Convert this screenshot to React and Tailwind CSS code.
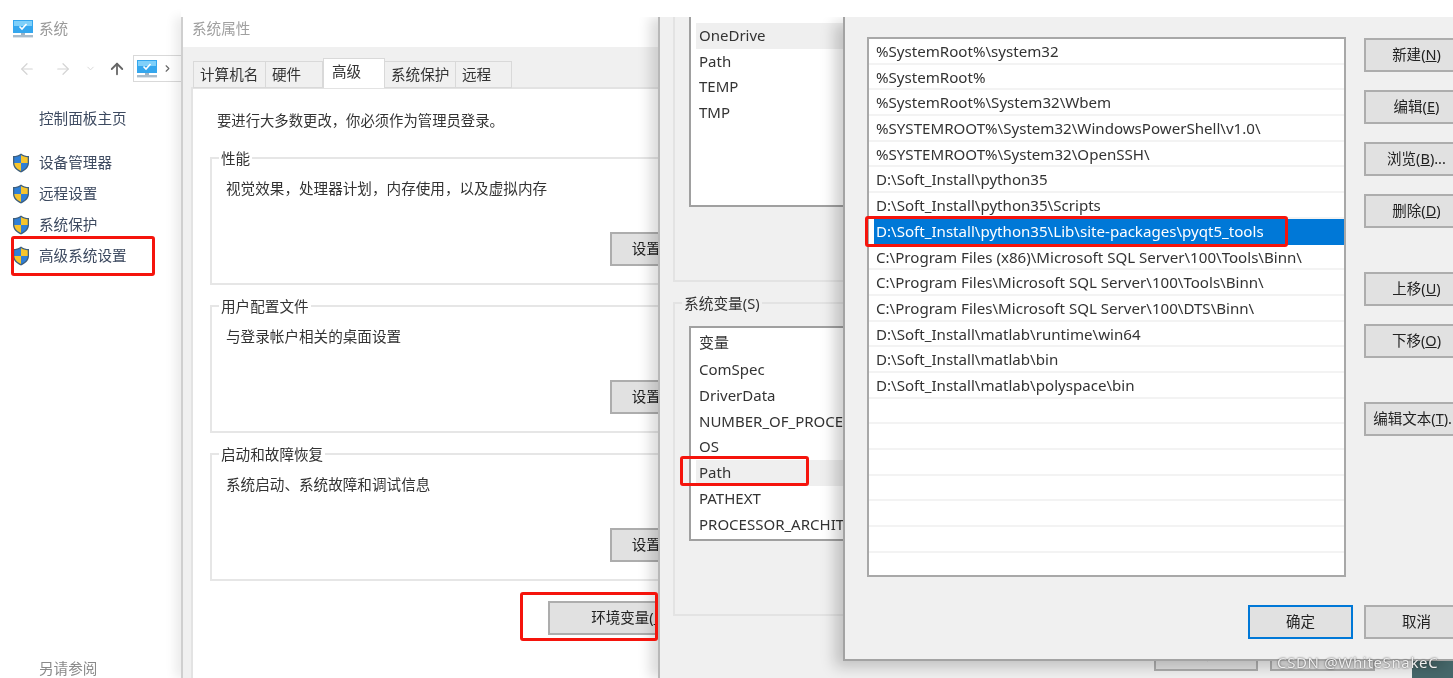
import { ArrowLeft, ArrowRight, ArrowUp, ChevronDown, ChevronRight } from "lucide-react";

const navLinks = ["设备管理器", "远程设置", "系统保护", "高级系统设置"];

const tabs = [
  { label: "计算机名", w: "w-[73px]" },
  { label: "硬件", w: "w-[57px]" },
  { label: "高级", w: "w-[62px]", active: true },
  { label: "系统保护", w: "w-[71px]" },
  { label: "远程", w: "w-[56px]" },
];

const groups = [
  { title: "性能", text: "视觉效果，处理器计划，内存使用，以及虚拟内存" },
  { title: "用户配置文件", text: "与登录帐户相关的桌面设置" },
  { title: "启动和故障恢复", text: "系统启动、系统故障和调试信息" },
];

const userVars = ["OneDrive", "Path", "TEMP", "TMP"];
const sysVars = ["ComSpec", "DriverData", "NUMBER_OF_PROCESSORS", "OS", "Path", "PATHEXT", "PROCESSOR_ARCHITECTURE"];

const paths = [
  "%SystemRoot%\\system32",
  "%SystemRoot%",
  "%SystemRoot%\\System32\\Wbem",
  "%SYSTEMROOT%\\System32\\WindowsPowerShell\\v1.0\\",
  "%SYSTEMROOT%\\System32\\OpenSSH\\",
  "D:\\Soft_Install\\python35",
  "D:\\Soft_Install\\python35\\Scripts",
  "D:\\Soft_Install\\python35\\Lib\\site-packages\\pyqt5_tools",
  "C:\\Program Files (x86)\\Microsoft SQL Server\\100\\Tools\\Binn\\",
  "C:\\Program Files\\Microsoft SQL Server\\100\\Tools\\Binn\\",
  "C:\\Program Files\\Microsoft SQL Server\\100\\DTS\\Binn\\",
  "D:\\Soft_Install\\matlab\\runtime\\win64",
  "D:\\Soft_Install\\matlab\\bin",
  "D:\\Soft_Install\\matlab\\polyspace\\bin",
  "", "", "", "", "", "", "",
];

const sideButtons = [
  { name: "新建", hotkey: "N", mt: "mt-[21px]" },
  { name: "编辑", hotkey: "E", mt: "mt-[18px]" },
  { name: "浏览", hotkey: "B", rest: "...", mt: "mt-[18px]" },
  { name: "删除", hotkey: "D", mt: "mt-[18px]" },
  { name: "上移", hotkey: "U", mt: "mt-[44px]" },
  { name: "下移", hotkey: "O", mt: "mt-[18px]" },
  { name: "编辑文本", hotkey: "T", rest: "...", mt: "mt-[44px]" },
];

function Monitor({ className }) {
  return (
    <svg viewBox="0 0 20 18" className={className}>
      <rect x="0" y="0" width="20" height="13" fill="#35a7ee" />
      <rect x="1" y="1" width="18" height="5" fill="#7fd0fa" />
      <path d="M6.5 6.5 L9 9 L13.5 4" fill="none" stroke="#fff" strokeWidth="1.6" />
      <rect x="8" y="13" width="4" height="2" fill="#9fb4c4" />
      <rect x="0" y="15" width="20" height="2.4" fill="#a9bccb" />
    </svg>
  );
}

function Shield() {
  return (
    <svg viewBox="0 0 18 20" className="w-[18px] h-[20px] shrink-0">
      <path d="M9 0.5 C6.5 2.5 4 3 1 3 V10 C1 14.5 4.5 17.5 9 19.5 C13.5 17.5 17 14.5 17 10 V3 C14 3 11.5 2.5 9 0.5 Z" fill="#3f5f7c" />
      <path d="M9 2 V10 H2.3 V4.2 C5 4.1 7 3.4 9 2 Z" fill="#2f7fd6" />
      <path d="M9 2 C11 3.4 13 4.1 15.7 4.2 V10 H9 Z" fill="#f7c52c" />
      <path d="M9 10 H2.3 C2.5 13.6 5.2 16.2 9 18 Z" fill="#f7c52c" />
      <path d="M9 10 H15.7 C15.5 13.6 12.8 16.2 9 18 Z" fill="#2f7fd6" />
    </svg>
  );
}

function WinButton({ children, className = "" }) {
  return (
    <div className={`h-[34px] shrink-0 flex items-center justify-center whitespace-nowrap bg-[#e1e1e1] border-2 border-[#adadad] text-[#222] text-[14.5px] ${className}`}>
      <span>{children}</span>
    </div>
  );
}

function HotLabel({ name, hotkey, rest = "" }) {
  return (
    <>
      {name}(<span className="underline">{hotkey}</span>){rest}
    </>
  );
}

function LeftPanel() {
  return (
    <div className="absolute left-0 top-0 w-[181px] h-[678px] flex flex-col bg-white">
      <div className="mt-[20px] ml-[13px] h-[18px] flex items-center gap-[6px] text-[#9a9a9a]">
        <Monitor className="w-[20px] h-[18px]" />
        <span>系统</span>
      </div>
      <div className="mt-[17px] h-[27px] flex items-center">
        <ArrowLeft size={18} strokeWidth={1.6} className="ml-[18px] text-[#d4d4d4]" />
        <ArrowRight size={18} strokeWidth={1.6} className="ml-[18px] text-[#d4d4d4]" />
        <ChevronDown size={11} strokeWidth={2} className="ml-[13px] text-[#d4d4d4]" />
        <ArrowUp size={18} strokeWidth={2.4} className="ml-[12px] text-[#666]" />
        <div className="ml-[7px] flex-1 h-[27px] flex items-center border border-[#d9d9d9] border-r-0 pl-[3px]">
          <Monitor className="w-[20px] h-[18px]" />
          <ChevronRight size={11} strokeWidth={2.4} className="ml-[5px] text-[#666]" />
        </div>
      </div>
      <div className="mt-[26px] ml-[39px] h-[20px] leading-[20px] text-[#3d4a60]">控制面板主页</div>
      <div className="mt-[25px] ml-[12px] flex flex-col gap-[11px]">
        {navLinks.map((link) => (
          <div key={link} className="h-[20px] flex items-center gap-[9px] text-[#3d4a60]">
            <Shield />
            <span>{link}</span>
          </div>
        ))}
      </div>
      <div className="mt-auto ml-[39px] h-[20px] leading-[20px] text-[#8a8a8a]">另请参阅</div>
    </div>
  );
}

function SystemProps() {
  return (
    <div className="absolute left-[181px] top-[17px] w-[477px] h-[661px] overflow-hidden bg-[#f0f0f0] border-l-2 border-[#cfcfcf] shadow-[-6px_0_10px_rgba(0,0,0,0.08)]">
      <div className="h-[30px] bg-white pl-[9px] pb-[6px] flex items-center text-[#a0a0a0]">系统属性</div>
      <div className="mt-[14px] ml-[10px] h-[27px] flex items-end relative z-10 -mb-[1px]">
        {tabs.map((tab) =>
          tab.active ? (
            <div key={tab.label} className={`${tab.w} h-[30px] pl-[8px] pt-[2px] bg-white border-x border-t border-[#d9d9d9] text-[#333]`}>
              {tab.label}
            </div>
          ) : (
            <div key={tab.label} className={`${tab.w} h-[27px] pl-[6px] flex items-center bg-[#f0f0f0] border border-[#d9d9d9] border-l-0 first:border-l text-[#333]`}>
              {tab.label}
            </div>
          )
        )}
      </div>
      <div className="ml-[8px] w-[520px] h-[620px] bg-white border-l-2 border-t-2 border-[#e3e3e3] pt-[22px] pl-[24px] text-[#333]">
        <div className="h-[20px] leading-[20px] text-[14.35px]">要进行大多数更改，你必须作为管理员登录。</div>
        <div className="mt-[17px] flex flex-col gap-[11px]">
          {groups.map((group) => (
            <fieldset key={group.title} className="w-[470px] -ml-[7px] h-[137px] border-2 border-[#e6e6e6] pl-[14px]">
              <legend className="-ml-[7px] px-[2px] h-[20px] leading-[20px]">{group.title}</legend>
              <div className="mt-[10px] h-[20px] leading-[20px]">{group.text}</div>
              <WinButton className="mt-[34px] ml-[384px] w-[101px]">
                <HotLabel name="设置" hotkey="S" rest="..." />
              </WinButton>
            </fieldset>
          ))}
        </div>
        <WinButton className="mt-[20px] ml-[331px] w-[176px]">
          <HotLabel name="环境变量" hotkey="N" rest="..." />
        </WinButton>
      </div>
    </div>
  );
}

function EnvVars() {
  return (
    <div className="absolute left-[658px] top-[17px] w-[754px] h-[661px] overflow-hidden bg-[#f0f0f0] border-l-2 border-[#b8b8b8] shadow-[-8px_0_12px_rgba(0,0,0,0.14)] text-[#333]">
      <div className="ml-[13px] w-[700px] h-[265px] border-l-2 border-b-2 border-[#e3e3e3]">
        <div className="ml-[14px] w-[600px] h-[190px] bg-white border-l-2 border-b-2 border-[#a0a0a0] pt-[6px] pl-[5px] text-[15px]">
          {userVars.map((name, i) => (
            <div key={name} className={`h-[25.7px] leading-[25.7px] pl-[3px] ${i === 0 ? "bg-[#efefef]" : ""}`}>{name}</div>
          ))}
        </div>
      </div>
      <fieldset className="mt-[11px] ml-[13px] w-[700px] h-[323px] border-2 border-[#e3e3e3]">
        <legend className="ml-[7px] px-[2px] h-[20px] leading-[20px] text-[14.7px]">系统变量(S)</legend>
        <div className="mt-[13px] ml-[14px] w-[600px] h-[215px] bg-white border-2 border-[#a0a0a0] pl-[5px] text-[15px]">
          <div className="h-[29px] leading-[29px] pl-[3px]">变量</div>
          {sysVars.map((name) => (
            <div key={name} className={`h-[25.8px] leading-[25.8px] pl-[3px] whitespace-nowrap ${name === "Path" ? "bg-[#efefef]" : ""}`}>{name}</div>
          ))}
        </div>
      </fieldset>
      <div className="mt-[21px] ml-[494px] flex gap-[12px]">
        <WinButton className="w-[104px]">确定</WinButton>
        <WinButton className="w-[105px]">取消</WinButton>
      </div>
    </div>
  );
}

function EditPath() {
  return (
    <div className="absolute left-[843px] top-[17px] w-[610px] h-[644px] overflow-hidden flex bg-[#f0f0f0] border-l-2 border-b-2 border-[#a3a3a3] shadow-[-8px_6px_14px_rgba(0,0,0,0.2)] text-[#333]">
      <div className="mt-[20px] ml-[22px] w-[479px] h-[540px] shrink-0 bg-white border-2 border-[#a8a8a8] overflow-hidden text-[15.1px]">
        {paths.map((path, i) => (
          <div
            key={i}
            className={`h-[25.7px] leading-[25px] whitespace-nowrap border-b-2 ${
              i === 7
                ? "ml-[5px] pl-[2px] bg-[#0078d7] text-white border-[#0078d7]"
                : "pl-[7px] border-[#f3f3f3]"
            }`}
          >
            {path}
          </div>
        ))}
      </div>
      <div className="ml-[18px] flex flex-col">
        {sideButtons.map((btn) => (
          <WinButton key={btn.name} className={`${btn.mt} w-[105px]`}>
            <HotLabel name={btn.name} hotkey={btn.hotkey} rest={btn.rest} />
          </WinButton>
        ))}
      </div>
      {/* bottom buttons sit in the corner of the dialog */}
      <WinButton className="absolute left-[403px] top-[588px] w-[105px] border-[#0078d7]!">确定</WinButton>
      <WinButton className="absolute left-[519px] top-[588px] w-[105px]">取消</WinButton>
    </div>
  );
}

function RedBox({ className }) {
  return <div className={`absolute border-[3px] border-[#f5140c] rounded-[3px] ${className}`} />;
}

export default function App() {
  return (
    <div className="relative w-[1453px] h-[678px] overflow-hidden bg-white text-[14.6px] blur-[0.4px] font-['Noto_Sans','Noto_Sans_CJK_SC',sans-serif]">
      <LeftPanel />
      <SystemProps />
      <EnvVars />
      <div className="absolute left-[1412px] top-[655px] w-[41px] h-[23px] bg-[#46686b]" />
      <EditPath />
      {/* the crop cuts the windows off at the top, shadows included */}
      <div className="absolute left-[181px] top-0 w-[1272px] h-[17px] bg-white" />

      <RedBox className="left-[11px] top-[236px] w-[144px] h-[40px]" />
      <RedBox className="left-[520px] top-[592px] w-[138px] h-[49px]" />
      <RedBox className="left-[680px] top-[456px] w-[129px] h-[30px]" />
      <RedBox className="left-[865px] top-[216px] w-[423px] h-[31px]" />

      <div className="absolute left-[1277px] top-[652px] text-[15px] leading-[20px] tracking-[0.65px] text-[#eeeeee] [text-shadow:0_0_2px_#333]">
        CSDN @WhiteSnakeC
      </div>
    </div>
  );
}
